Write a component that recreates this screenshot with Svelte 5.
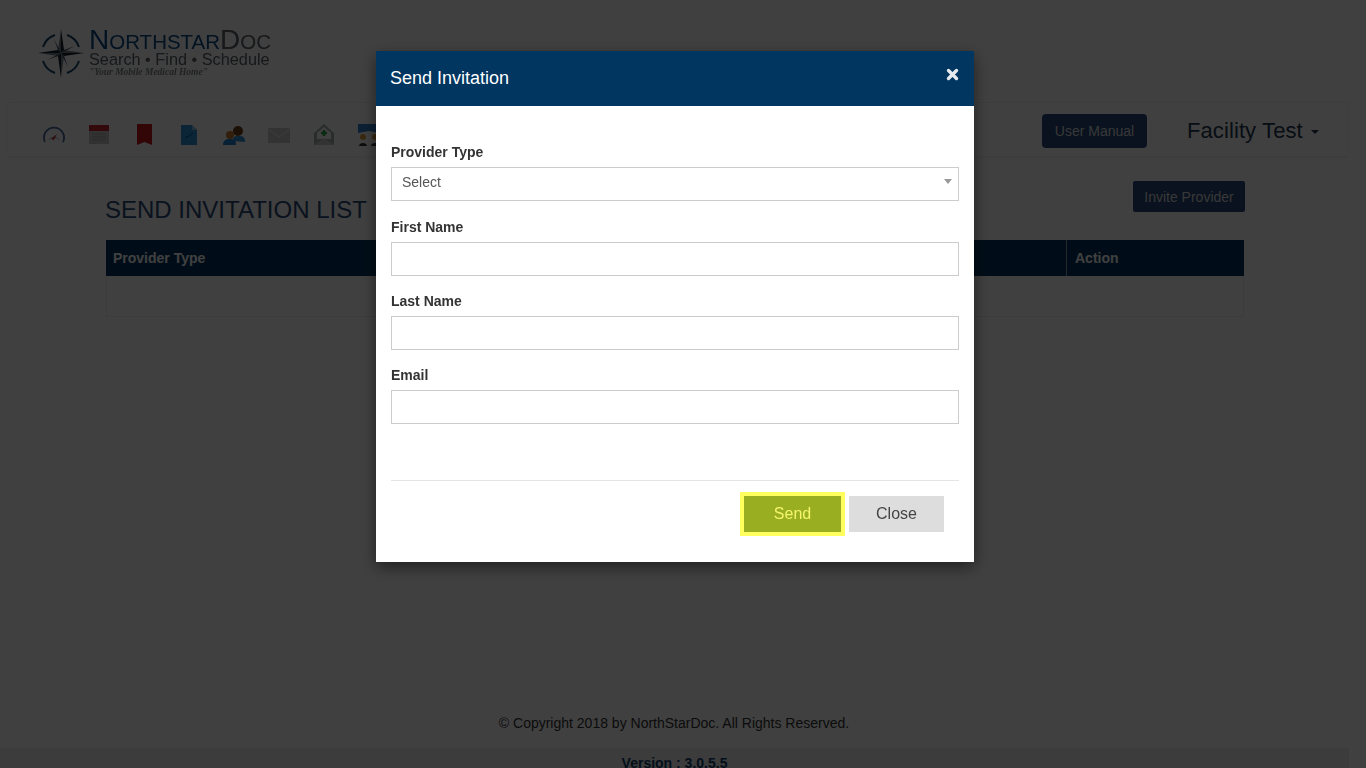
<script>
  const fields = ["First Name", "Last Name", "Email"];
</script>

<div class="page">
  <header class="brand">
    <div class="logo">
      <svg class="compass" width="48" height="52" viewBox="0 0 48 52">
        <path d="M6 19a19 19 0 0 1 12-12M30 7a19 19 0 0 1 12 12M42 33a19 19 0 0 1-12 12M18 45a19 19 0 0 1-12-12" fill="none" stroke="#17486f" stroke-width="2" />
        <path d="M24 1 L27 22 L24 25 Z M47 25 L27 28 L24 25 Z M24 50 L21 28 L24 25 Z M1 25 L21 22 L24 25 Z" fill="#16232e" />
        <path d="M24 1 L21 22 L24 25 Z M47 25 L27 22 L24 25 Z M24 50 L27 28 L24 25 Z M1 25 L21 28 L24 25 Z" fill="#7a848c" />
        <path d="M24 25 L17 11 L21 22 Z M24 25 L38 18 L27 22 Z M24 25 L31 39 L27 28 Z M24 25 L10 32 L21 28 Z" fill="#34495c" />
      </svg>
      <div class="wordmark">
        <div class="name"><span class="navy">N<small>ORTHSTAR</small></span><span class="doc">D<small>OC</small></span></div>
        <div class="slogan">Search • Find • Schedule</div>
        <div class="tag">"Your Mobile Medical Home"</div>
      </div>
    </div>
  </header>

  <nav class="navbar">
    <div class="icons">
      <svg width="24" height="24" viewBox="0 0 24 24"><path d="M3 19a10 10 0 1 1 18 0z" fill="#fff" /><path d="M3 19a10 10 0 1 1 18 0" fill="none" stroke="#4a6a9f" stroke-width="1.800" /><path d="M7 17a6 6 0 0 1 10 0" fill="none" stroke="#a0aecb" /><path d="M9 16l6-5-3 6z" fill="#c4303a" /></svg>
      <svg width="24" height="24" viewBox="0 0 24 24"><rect x="2" y="2" width="20" height="6" fill="#c9262c" /><rect x="2" y="8" width="20" height="13" fill="#c8c8c8" /><path d="M5 11h14M5 14h14M5 17h14" stroke="#a5a5a5" /></svg>
      <svg width="24" height="24" viewBox="0 0 24 24"><path d="M5 1h15v21l-7.500-3L5 22z" fill="#c8191f" /></svg>
      <svg width="24" height="24" viewBox="0 0 24 24"><path d="M4 2h11l5 5v15H4z" fill="#2f8fd8" /><path d="M15 2v5h5" fill="#8cc4ee" /><path d="M8 15l4-2 4-3" stroke="#0c4f8c" fill="none" /></svg>
      <svg width="24" height="24" viewBox="0 0 24 24"><circle cx="8" cy="12" r="4" fill="#c77a2c" /><circle cx="16" cy="8" r="5" fill="#6b3f18" /><path d="M11 18c0-5 2-5 6-5s6 1 6 6z" fill="#2f8fd8" /><path d="M1 22c0-5 3-6 7-6s6 1 6 6z" fill="#1f7fd0" /></svg>
      <svg width="24" height="24" viewBox="0 0 24 24"><rect x="1" y="5" width="22" height="15" fill="#c9c9c9" /><path d="M1 6l11 8 11-8" fill="none" stroke="#e4e4e4" stroke-width="1.500" /></svg>
      <svg width="24" height="24" viewBox="0 0 24 24"><path d="M2 10L12 1l10 9v12H2z" fill="#a9b0b0" /><path d="M5 10l7-6 7 6v6H5z" fill="#fff" /><path d="M2 22l10-7 10 7z" fill="#c9c9c9" /><path d="M12 7v6M9 10h6" stroke="#28a745" stroke-width="2.400" /></svg>
      <svg width="24" height="24" viewBox="0 0 24 24"><path d="M1 1h22v9l-11-2-11 2z" fill="#2f7fd0" /><circle cx="6" cy="14" r="3" fill="#e0a040" /><circle cx="18" cy="14" r="3" fill="#e0a040" /><path d="M2 23c0-4 8-4 8 0zM14 23c0-4 8-4 8 0z" fill="#333" /></svg>
    </div>
    <div class="right">
      <button class="manual">User Manual</button>
      <span class="user">Facility Test <i class="caret"></i></span>
    </div>
  </nav>

  <main class="content">
    <div class="title-row">
      <h1>SEND INVITATION LIST</h1>
      <button class="invite">Invite Provider</button>
    </div>
    <div class="table">
      <div class="thead">
        <span class="col-type">Provider Type</span>
        <span class="col-action">Action</span>
      </div>
      <div class="tbody"></div>
    </div>
  </main>

  <footer>
    <p class="copy">© Copyright 2018 by NorthStarDoc. All Rights Reserved.</p>
    <div class="version">Version : 3.0.5.5</div>
  </footer>
</div>

<div class="backdrop"></div>

<div class="modal">
  <div class="modal-head">
    <span class="modal-title">Send Invitation</span>
    <svg class="close-x" width="13" height="13" viewBox="0 0 13 13"><path d="M2.500 2.500l8 8M10.500 2.500l-8 8" stroke="#e6eaee" stroke-width="3.400" stroke-linecap="round" /></svg>
  </div>
  <div class="modal-body">
    <div class="field">
      <span class="label">Provider Type</span>
      <div class="select">Select<i></i></div>
    </div>
    {#each fields as field}
      <div class="field">
        <span class="label">{field}</span>
        <div class="input"></div>
      </div>
    {/each}
  </div>
  <div class="modal-foot">
    <button class="send">Send</button>
    <button class="close">Close</button>
  </div>
</div>

<style>
  :global(body) {
    margin: 0;
    background: #fff;
    font-family: "Liberation Sans", Arial, sans-serif;
    overflow: hidden;
  }

  .page {
    height: 768px;
    display: flex;
    flex-direction: column;
    color: #333;
  }

  .brand {
    height: 102px;
    padding: 28px 0 0 37px;
    box-sizing: border-box;
  }

  .logo {
    display: flex;
    align-items: flex-start;
    gap: 4px;
  }

  .wordmark {
    filter: blur(0.5px);
  }

  .name {
    font-size: 28px;
    line-height: 24px;
    height: 24px;
    color: #0b4a85;
  }

  .name small {
    font-size: 20.500px;
  }

  .doc {
    color: #5a6066;
  }

  .slogan {
    font-size: 16.300px;
    line-height: 15px;
    height: 15px;
    color: #5a6066;
  }

  .tag {
    font-family: "Liberation Serif", serif;
    font-style: italic;
    font-weight: 700;
    font-size: 9.500px;
    line-height: 11px;
    color: #7d8a80;
  }

  .navbar {
    height: 55px;
    box-sizing: border-box;
    margin: 0 18px 0 8px;
    padding: 11px 29px 0 34px;
    display: flex;
    justify-content: space-between;
    border-bottom: 1px solid #eee;
    border-top: 1px solid #f2f2f2;
    box-shadow: 0 1px 4px rgba(0, 0, 0, 0.05);
  }

  .icons {
    display: flex;
    gap: 21px;
    padding-top: 9px;
    align-items: flex-start;
    filter: blur(0.6px);
  }

  .right {
    display: flex;
    align-items: flex-start;
    gap: 40px;
  }

  button {
    font-family: inherit;
    border: none;
    padding: 0;
  }

  .manual {
    width: 105px;
    height: 34px;
    border-radius: 4px;
    background: #25497a;
    color: #ddd;
    font-size: 14px;
  }

  .user {
    font-size: 22px;
    letter-spacing: 0.100px;
    line-height: 34px;
    color: #22384f;
  }

  .caret {
    display: inline-block;
    border-top: 4px solid #22384f;
    border-left: 4px solid transparent;
    border-right: 4px solid transparent;
    vertical-align: middle;
    margin-left: 2px;
  }

  .content {
    flex: 1;
    padding: 24px 121px 0 105px;
  }

  .title-row {
    display: flex;
    justify-content: space-between;
    align-items: flex-start;
    height: 59px;
  }

  h1 {
    margin: 15px 0 0;
    font-size: 24px;
    line-height: 28px;
    font-weight: 400;
    color: #2a4a78;
  }

  .invite {
    width: 112px;
    height: 31px;
    background: #25497a;
    color: #ddd;
    font-size: 14px;
    border-radius: 2px;
  }

  .table {
    margin: 0 1px;
  }

  .thead {
    height: 36px;
    display: flex;
    justify-content: space-between;
    background: #003660;
    color: #fff;
    font-size: 14px;
    font-weight: 700;
    line-height: 36px;
  }

  .col-type {
    padding-left: 7px;
  }

  .col-action {
    width: 178px;
    box-sizing: border-box;
    padding-left: 8px;
    border-left: 1px solid #8a9aa8;
  }

  .tbody {
    height: 40px;
    border: 1px solid #eee;
    border-top: none;
  }

  footer {
    text-align: center;
  }

  .copy {
    margin: 0 18px 15px 0;
    font-size: 14px;
    line-height: 20px;
    color: #333;
  }

  .version {
    height: 20px;
    margin-right: 17px;
    background: #eee;
    font-size: 14px;
    font-weight: 700;
    line-height: 30px;
    color: #123f6b;
    overflow: hidden;
  }

  .backdrop {
    position: fixed;
    inset: 0;
    background: rgba(0, 0, 0, 0.75);
  }

  .modal {
    position: fixed;
    left: 376px;
    top: 51px;
    width: 598px;
    height: 511px;
    background: #fff;
    display: flex;
    flex-direction: column;
    box-shadow: 0 5px 15px rgba(0, 0, 0, 0.5);
  }

  .modal-head {
    height: 55px;
    flex: none;
    background: #003660;
    color: #fff;
    font-size: 18px;
    line-height: 54px;
    padding: 0 15px;
    display: flex;
    justify-content: space-between;
  }

  .modal-title {
    margin-left: -1px;
  }

  .close-x {
    margin-top: 17px;
  }

  .modal-body {
    flex: 1;
    padding: 36px 15px 0;
  }

  .field {
    height: 74px;
  }

  .field:first-child {
    height: 75px;
  }

  .label {
    display: block;
    font-size: 14px;
    font-weight: 700;
    line-height: 20px;
    color: #333;
    margin-bottom: 5px;
  }

  .select,
  .input {
    height: 34px;
    box-sizing: border-box;
    border: 1px solid #ccc;
    font-size: 14px;
    line-height: 28px;
    color: #555;
    padding-left: 10px;
    position: relative;
  }

  .select i {
    position: absolute;
    right: 6px;
    top: 11px;
    border-top: 5px solid #999;
    border-left: 4px solid transparent;
    border-right: 4px solid transparent;
  }

  .modal-foot {
    height: 82px;
    flex: none;
    box-sizing: border-box;
    margin: 0 15px;
    border-top: 1px solid #e5e5e5;
    padding: 15px 15px 0 0;
    display: flex;
    justify-content: flex-end;
    align-items: flex-start;
    gap: 8px;
  }

  .send,
  .close {
    height: 36px;
    font-size: 16px;
  }

  .send {
    width: 97px;
    background: #9aae22;
    color: #f4f56a;
    outline: 4px solid #ffff5e;
  }

  .close {
    width: 95px;
    background: #ddd;
    color: #444;
  }
</style>
